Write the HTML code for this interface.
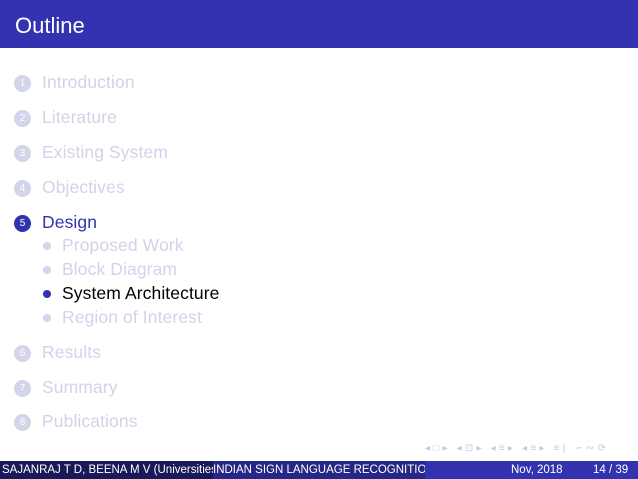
<!DOCTYPE html>
<html><head><meta charset="utf-8"><style>
*{margin:0;padding:0;box-sizing:border-box}
body{width:638px;height:479px;background:#fff;position:relative;overflow:hidden;font-family:"Liberation Sans",sans-serif}
.hdr{position:absolute;left:0;top:0;width:638px;height:48px;background:#3333b2;color:#fff;font-size:22px;padding:13px 0 0 15px}
.it{position:absolute;left:42px;font-size:17.5px;color:#d2d2ea;white-space:nowrap;letter-spacing:0.1px}
.n{position:absolute;left:14px;width:17px;height:17px;border-radius:50%;background:#d4d4ea;color:#fff;font-size:10px;text-align:center;line-height:17px}
.s{position:absolute;left:62px;font-size:17.5px;color:#d2d2ea;white-space:nowrap;letter-spacing:0.1px}
.b{position:absolute;left:43px;width:8px;height:8px;border-radius:50%;background:#d4d4ea}
.ft{position:absolute;top:461px;height:18px;color:#fff;font-size:11.5px;line-height:18px;white-space:nowrap;overflow:hidden}
.nav{position:absolute;left:425px;top:443px;font-size:10px;color:#c8c8dd;letter-spacing:3.2px}
</style></head><body>
<div class="hdr">Outline</div>

<div class="n" style="top:75px">1</div><div class="it" style="top:72px">Introduction</div>
<div class="n" style="top:110px">2</div><div class="it" style="top:107px">Literature</div>
<div class="n" style="top:145px">3</div><div class="it" style="top:142px">Existing System</div>
<div class="n" style="top:180px">4</div><div class="it" style="top:177px">Objectives</div>
<div class="n" style="top:215px;background:#3333b2">5</div><div class="it" style="top:212px;color:#3333b2">Design</div>
<div class="b" style="top:242px"></div><div class="s" style="top:235px">Proposed Work</div>
<div class="b" style="top:266px"></div><div class="s" style="top:259px">Block Diagram</div>
<div class="b" style="top:290px;background:#3333b2"></div><div class="s" style="top:283px;color:#000">System Architecture</div>
<div class="b" style="top:314px"></div><div class="s" style="top:307px">Region of Interest</div>
<div class="n" style="top:345px">6</div><div class="it" style="top:342px">Results</div>
<div class="n" style="top:380px">7</div><div class="it" style="top:377px">Summary</div>
<div class="n" style="top:414px">8</div><div class="it" style="top:411px">Publications</div>

<div class="nav">◂□▸ ◂⊡▸ ◂≡▸ ◂≡▸ ≡| ∽∾⟳</div>

<div class="ft" style="left:0;width:213px;background:#191959;padding-left:2px">SAJANRAJ T D, BEENA M V (Universities</div>
<div class="ft" style="left:213px;width:212px;background:#262686">INDIAN SIGN LANGUAGE RECOGNITION U</div>
<div class="ft" style="left:425px;width:213px;background:#3333b2"><span style="position:absolute;left:86px">Nov, 2018</span><span style="position:absolute;left:168px">14 / 39</span></div>
</body></html>
